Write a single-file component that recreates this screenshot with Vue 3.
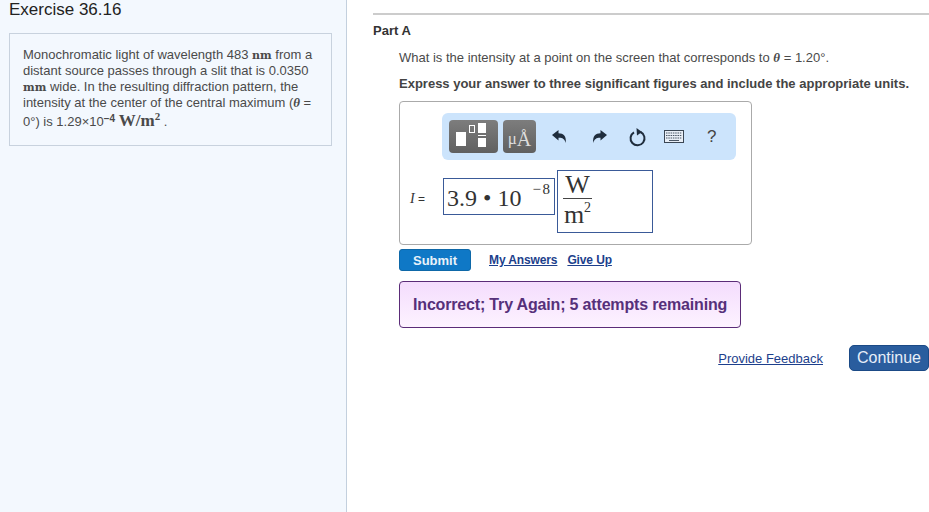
<template>
  <div class="page">
    <aside class="side">
      <h1 class="title">Exercise 36.16</h1>
      <div class="intro">
        Monochromatic light of wavelength 483 <b class="m">nm</b> from a distant source passes through a slit that is 0.0350
        <b class="m">mm</b> wide. In the resulting diffraction pattern, the intensity at the center of the central maximum (<i class="th">θ</i> =
        0°) is 1.29×10<sup class="s">−4</sup> <b class="w">W/m<sup class="s2">2</sup></b> .
      </div>
    </aside>
    <main class="main">
      <div class="rule"></div>
      <h2 class="part">Part A</h2>
      <div class="body">
        <p class="q">What is the intensity at a point on the screen that corresponds to <i class="th">θ</i> = 1.20°.</p>
        <p class="ex">Express your answer to three significant figures and include the appropriate units.</p>
        <div class="answer">
          <div class="toolbar">
            <div class="tbtn t1">
              <svg width="49" height="33" viewBox="0 0 49 33">
                <rect x="7" y="12" width="10" height="14" fill="#fff"/>
                <rect x="20.500" y="5.500" width="5" height="7" fill="none" stroke="#fff"/>
                <rect x="29" y="3" width="8" height="10" fill="#fff"/>
                <rect x="29" y="15" width="8" height="1" fill="#fff"/>
                <rect x="29" y="18" width="8" height="9" fill="#fff"/>
              </svg>
            </div>
            <div class="tbtn t2"><span class="mu">μ</span><span class="aa">Å</span></div>
            <svg class="ic i1" width="18" height="16" viewBox="0 0 18 16"><path d="M1 6 L7.500 1 V4.200 C12.500 4.200 15.500 7 14.800 14 C13.500 9.800 11.200 8.600 7.500 8.800 V11.500 Z" fill="#1f2d3d"/></svg>
            <svg class="ic i2" width="18" height="16" viewBox="0 0 18 16"><path d="M16 6 L9.500 1 V4.200 C4.500 4.200 1.500 7 2.200 14 C3.500 9.800 5.800 8.600 9.500 8.800 V11.500 Z" fill="#1f2d3d"/></svg>
            <svg class="ic i3" width="18" height="20" viewBox="0 0 18 20"><path d="M5 5.300 A7 7 0 1 0 11.500 5" fill="none" stroke="#1f2d3d" stroke-width="2"/><path d="M7.500 1 L13 5 L8 8.500 Z" fill="#1f2d3d"/></svg>
            <svg class="ic i4" width="20" height="13" viewBox="0 0 20 13"><rect x="0.500" y="0.500" width="19" height="12" fill="#e8eef6" stroke="#3a4654"/><path d="M2 3h16M2 5.500h16M2 8h16" stroke="#4a5665" stroke-dasharray="1.500 .8"/><path d="M5 10.500h10" stroke="#4a5665"/></svg>
            <span class="help">?</span>
          </div>
          <div class="math">
            <span class="lbl"><i>I</i> =</span>
            <div class="mbox val">3.9 • 10<sup class="ex8">− 8</sup></div>
            <div class="mbox unit">
              <div class="frac"><span class="num">W</span><span class="den">m<sup>2</sup></span></div>
            </div>
          </div>
        </div>
        <div class="actions">
          <button class="submit">Submit</button>
          <a class="lnk first">My Answers</a>
          <a class="lnk">Give Up</a>
        </div>
        <div class="fb">Incorrect; Try Again; 5 attempts remaining</div>
      </div>
      <div class="foot">
        <a class="pf">Provide Feedback</a>
        <button class="cont">Continue</button>
      </div>
    </main>
  </div>
</template>

<script setup>
</script>

<style>
html, body { margin: 0; background: #fff; }
</style>

<style scoped>
.page { display: flex; width: 929px; height: 512px; overflow: hidden; font-family: "Liberation Sans", Arial, sans-serif; color: #444; background: #fff; }
.side { flex: none; background: #f3f8fe; border-right: 1px solid #c3d0de; padding: 0 14px 0 9px; width: 323px; }
.title { margin: 0; font-size: 17px; font-weight: 400; line-height: 19px; color: #222; height: 33px; }
.intro { border: 1px solid #c8d2de; padding: 13px 13px 0; font-size: 13px; line-height: 16px; height: 98px; color: #4a4a4a; }
.m { font-family: "DejaVu Serif", serif; font-size: 11px; font-weight: 700; line-height: 1; }
.th { font-family: "Liberation Serif", serif; font-weight: 700; font-size: 13px; line-height: 1; }
.s { font-size: 10px; line-height: 0; vertical-align: 4px; font-weight: 700; }
.w { font-family: "Liberation Serif", serif; font-size: 17px; line-height: 20px; }
.s2 { font-size: 11px; line-height: 0; vertical-align: 6px; }
.main { flex: 1; padding: 13px 0 0 26px; min-width: 0; }
.rule { height: 2px; background: #ccc; }
.part { margin: 8px 0 0; font-size: 13px; line-height: 15px; font-weight: 700; color: #333; }
.body { padding-left: 26px; }
.q { margin: 12px 0 0; font-size: 13px; line-height: 15px; color: #4a4a4a; }
.ex { margin: 11px 0 0; font-size: 13px; line-height: 15px; font-weight: 700; color: #444; }
.answer { box-sizing: border-box; width: 353px; height: 144px; margin-top: 10px; border: 1px solid #aaa; border-radius: 4px; padding: 11px 15px 0 42px; }
.toolbar { box-sizing: border-box; height: 47px; display: flex; align-items: center; padding-left: 7px; background: #cce4fc; border-radius: 6px; }
.tbtn { height: 33px; border-radius: 4px; background: linear-gradient(#7d7d7d, #606060); display: flex; align-items: center; justify-content: center; }
.t1 { width: 49px; }
.t2 { width: 33px; margin-left: 5px; color: #dcdcdc; font-family: "Liberation Serif", serif; font-size: 17px; line-height: 1; align-items: flex-end; padding-bottom: 4px; box-sizing: border-box; }
.aa { font-size: 20px; line-height: 20px; }
.mu { line-height: 20px; }
.ic { flex: none; }
.i1 { margin-left: 15px; }
.i2 { margin-left: 22px; }
.i3 { margin-left: 20px; }
.i4 { margin-left: 17px; }
.help { margin-left: 23px; font-size: 17px; color: #444; }
.math { display: flex; align-items: flex-start; margin-top: 10px; margin-left: -32px; color: #333; font-family: "Liberation Serif", serif; }
.lbl { width: 33px; margin-top: 20px; font-size: 12px; line-height: 17px; font-family: "Liberation Sans", sans-serif; }
.lbl i { font-family: "Liberation Serif", serif; font-size: 14px; }
.mbox { box-sizing: border-box; border: 1px solid #3a5a98; background: #fff; }
.val { width: 112px; height: 37px; margin-top: 8px; font-size: 24px; line-height: 38px; padding-left: 3px; white-space: nowrap; }
.ex8 { font-size: 15px; line-height: 0; vertical-align: 12px; margin-left: 11px; word-spacing: -2px; }
.unit { width: 96px; height: 63px; margin-left: 2px; padding: 1px 0 0 5px; }
.frac { display: inline-flex; flex-direction: column; align-items: center; width: 29px; }
.num { font-size: 26px; line-height: 26px; border-bottom: 1px solid #444; width: 100%; text-align: center; }
.den { font-size: 26px; line-height: 32px; white-space: nowrap; }
.den sup { font-size: 14px; line-height: 0; vertical-align: 11px; }
.actions { display: flex; align-items: center; margin-top: 4px; height: 22px; }
.submit { box-sizing: border-box; width: 72px; height: 22px; padding: 0; border: 1px solid #0e68a8; border-radius: 3px; background: #0f78c6; color: #e8f2fa; font: 700 13px "Liberation Sans", sans-serif; }
.lnk { font-size: 12px; font-weight: 700; color: #1d3f8c; text-decoration: underline; margin-left: 10px; letter-spacing: -.12px; }
.lnk.first { margin-left: 18px; }
.fb { box-sizing: border-box; width: 342px; height: 47px; margin-top: 10px; border: 1px solid #5b2c78; border-radius: 4px; background: linear-gradient(#f4dcfd, #fdf3ff); color: #56307a; font-size: 16px; font-weight: 700; line-height: 45px; padding-left: 13px; white-space: nowrap; letter-spacing: -.17px; }
.foot { display: flex; align-items: center; justify-content: flex-end; margin-top: 17px; }
.pf { font-size: 13px; color: #1d3f8c; text-decoration: underline; margin-right: 26px; }
.cont { box-sizing: border-box; width: 80px; height: 26px; padding: 0; border: 1px solid #1b4a86; border-radius: 5px; background: #2a5d9e; color: #e6eef8; font: 400 16px "Liberation Sans", sans-serif; }
</style>
